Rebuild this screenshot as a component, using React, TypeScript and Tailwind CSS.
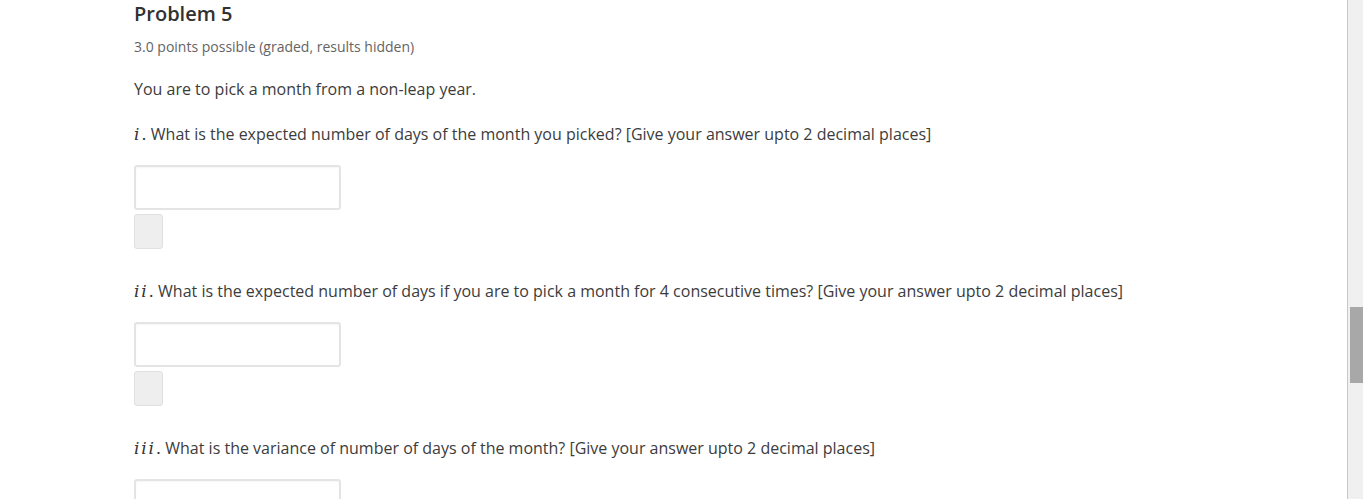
import React from "react"

const questions = [
  { num: "i", text: "What is the expected number of days of the month you picked? [Give your answer upto 2 decimal places]" },
  { num: "ii", text: "What is the expected number of days if you are to pick a month for 4 consecutive times? [Give your answer upto 2 decimal places]" },
  { num: "iii", text: "What is the variance of number of days of the month? [Give your answer upto 2 decimal places]" },
]

function Question({ num, text }: { num: string; text: string }) {
  return (
    <div className="flex flex-col">
      <p className="text-[16px] leading-[24px] text-[#3c3c3c]">
        <span className="italic text-[17px] tracking-[1.8px] font-['DejaVu_Serif','Liberation_Serif',serif] text-[#333]">{num}</span>
        <span className="font-['DejaVu_Serif',serif] text-[17px] text-[#333]">.</span> {text}
      </p>
      <input
        type="text"
        className="mt-[19px] w-[207px] h-[45px] rounded-[3px] border-2 border-[#e4e4e4] bg-white outline-none shadow-[inset_0_1px_2px_rgba(0,0,0,0.04)]"
      />
      <button className="mt-[4px] w-[29px] h-[35px] rounded-[3px] border border-[#e0e0e0] bg-[#eeeeee]" />
    </div>
  )
}

export default function App() {
  return (
    <div className="flex h-[499px] w-full overflow-hidden bg-white font-['Open_Sans',sans-serif]">
      <main className="flex-1 pl-[134px]">
        <h2 className="text-[20px] leading-[28px] font-semibold text-[#313131]">Problem 5</h2>
        <div className="mt-[9px] text-[14px] leading-[20px] text-[#646464]">3.0 points possible (graded, results hidden)</div>
        <p className="mt-[20px] text-[16px] leading-[24px] text-[#3c3c3c]">You are to pick a month from a non-leap year.</p>
        <div className="mt-[21px] flex flex-col gap-[30px]">
          {questions.map((q) => (
            <Question key={q.num} num={q.num} text={q.text} />
          ))}
        </div>
      </main>
      <aside className="relative w-[16px] shrink-0 border-l border-[#c9c9c9] bg-[#f0f0f0]">
        <div className="absolute right-0 top-[307px] h-[76px] w-[13px] bg-[#a8a8a8]" />
      </aside>
    </div>
  )
}
